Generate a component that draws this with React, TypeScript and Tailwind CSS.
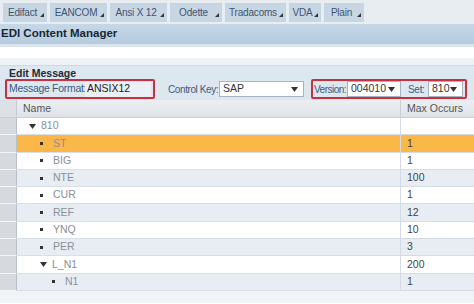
const tabs = [
  { label: "Edifact", w: "w-[44px]" },
  { label: "EANCOM", w: "w-[57px]" },
  { label: "Ansi X 12", w: "w-[57px]" },
  { label: "Odette", w: "w-[52px]" },
  { label: "Tradacoms", w: "w-[61px]" },
  { label: "VDA", w: "w-[32px]" },
  { label: "Plain", w: "w-[40px]" },
];

type Row = {
  name: string;
  max: string;
  level: number;
  node: "open" | "leaf";
};

const rows: Row[] = [
  { name: "810", max: "", level: 0, node: "open" },
  { name: "ST", max: "1", level: 1, node: "leaf" },
  { name: "BIG", max: "1", level: 1, node: "leaf" },
  { name: "NTE", max: "100", level: 1, node: "leaf" },
  { name: "CUR", max: "1", level: 1, node: "leaf" },
  { name: "REF", max: "12", level: 1, node: "leaf" },
  { name: "YNQ", max: "10", level: 1, node: "leaf" },
  { name: "PER", max: "3", level: 1, node: "leaf" },
  { name: "L_N1", max: "200", level: 1, node: "open" },
  { name: "N1", max: "1", level: 2, node: "leaf" },
];

const indent = ["pl-[12px]", "pl-[23px]", "pl-[35px]"];

function Caret() {
  return (
    <svg width="7" height="5" viewBox="0 0 7 5" className="shrink-0">
      <path d="M0 0H7L3.5 5Z" fill="#333" />
    </svg>
  );
}

function Select({ value, className }: { value: string; className: string }) {
  return (
    <div
      className={`flex h-[16px] shrink-0 items-center justify-between border border-[#a9b3bd] bg-white pl-[3px] pr-[5px] text-[10.5px] text-[#333] ${className}`}
    >
      <span>{value}</span>
      <Caret />
    </div>
  );
}

/**
 * EDI content manager screen with the message tree table.
 */
export default function App() {
  return (
    <div
      className="h-[304px] w-[474px] overflow-hidden whitespace-nowrap bg-white text-[10.5px]"
      style={{ fontFamily: '"Liberation Sans", Arial, sans-serif' }}
    >
      {/* tab strip */}
      <div className="flex h-[24px] gap-[3px] bg-[#e8edf2] pl-[3px] pt-[3px]">
        {tabs.map((t) => (
          <div
            key={t.label}
            className={`relative flex h-[19px] shrink-0 items-center justify-center bg-[#c8d6e4] pr-[5px] text-[10px] tracking-[-0.2px] text-[#3e5470] ${t.w}`}
          >
            {t.label}
            <svg
              width="4"
              height="4"
              viewBox="0 0 4 4"
              className="absolute bottom-[5px] right-[3px]"
            >
              <path d="M4 0V4H0Z" fill="#2b3645" />
            </svg>
          </div>
        ))}
      </div>

      {/* title */}
      <div className="flex h-[20px] items-center bg-gradient-to-b from-[#c6d8e8] to-[#b4cbdf] pl-[1px] text-[11.5px] font-bold text-[#1b2634]">
        EDI Content Manager
      </div>
      <div className="h-[3px] bg-[#d9e4ee]" />
      <div className="h-[11px] bg-white" />
      <div className="h-[8px] border-b border-[#cfd9e3] bg-[#eef2f6]" />

      {/* edit message panel */}
      <div className="bg-[#dde7f0]">
        <div className="flex h-[12px] items-end pl-[9px] text-[10.5px] font-bold leading-none text-[#1f2a36]">
          Edit Message
        </div>
        <div className="flex h-[22px] items-center">
          <div className="ml-[5px] flex h-[20px] w-[150px] shrink-0 items-center rounded-[2px] border-2 border-[#c8303f] pl-[2px]">
            <span className="w-[76px] tracking-[-0.3px] text-[#3b5b80]">
              Message Format:
            </span>
            <div className="flex h-[15px] w-[66px] items-center bg-[#eaf0f6] pl-[2px] text-[#222]">
              ANSIX12
            </div>
          </div>
          <span className="ml-[13px] w-[51px] shrink-0 overflow-hidden text-[10px] tracking-[-0.4px] text-[#3b5b80]">
            Control Key:
          </span>
          <Select value="SAP" className="w-[85px]" />
          <div className="ml-[7px] flex h-[20px] w-[156px] shrink-0 items-center rounded-[2px] border-2 border-[#c8303f] pl-[1px]">
            <span className="w-[33px] shrink-0 overflow-hidden text-[10px] tracking-[-0.5px] text-[#3b5b80]">
              Version:
            </span>
            <Select value="004010" className="w-[54px]" />
            <span className="ml-[7px] w-[20px] shrink-0 text-[10px] tracking-[-0.3px] text-[#3b5b80]">
              Set:
            </span>
            <Select value="810" className="w-[35px]" />
          </div>
        </div>
      </div>

      {/* table */}
      <div className="flex h-[18px] border-b border-[#c9cfd6] bg-gradient-to-b from-[#eceff2] to-[#dfe3e8] text-[#555]">
        <div className="w-[17px] border-r border-[#c5cbd2] bg-[#dde1e6]" />
        <div className="flex flex-1 items-center pl-[6px]">Name</div>
        <div className="flex w-[74px] items-center border-l border-[#c9cfd6] pl-[6px]">
          Max Occurs
        </div>
      </div>
      {rows.map((r, i) => {
        const bg =
          i === 1 ? "bg-[#fbb848]" : i % 2 === 1 ? "bg-[#e8edf3]" : "bg-white";
        return (
          <div key={r.name} className="flex h-[17.3px]">
            <div className="w-[17px] border-b border-r border-b-[#f4f5f7] border-r-[#b9c0c8] bg-[#d6dadf]" />
            <div
              className={`flex flex-1 items-center border-b border-[#d9dfe6] text-[#8a8f96] ${bg} ${indent[r.level]}`}
            >
              {r.node === "open" ? (
                <span className="flex w-[11px] items-center">
                  <Caret />
                </span>
              ) : (
                <span className="flex w-[12px] items-center">
                  <span className="h-[3px] w-[3px] bg-[#333]" />
                </span>
              )}
              <span className="ml-[1px]">{r.name}</span>
            </div>
            <div
              className={`flex w-[74px] items-center border-b border-l border-[#d5dbe2] pl-[6px] text-[#444] ${bg}`}
            >
              {r.max}
            </div>
          </div>
        );
      })}
      <div className="h-[12px] bg-[#f1f4f7]" />
    </div>
  );
}
